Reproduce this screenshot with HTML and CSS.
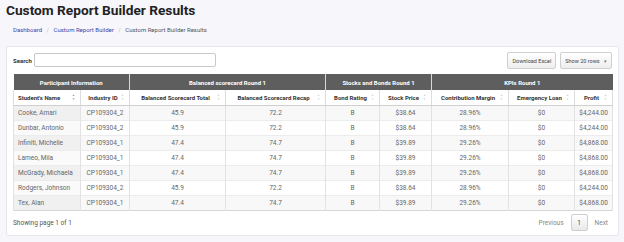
FILE: index.html
```html
<!DOCTYPE html>
<html>
<head>
  <title>Custom Report Builder Results</title>
  <link rel="stylesheet" href="styles.css">
</head>
<body>
  <h1 class="page-title">Custom Report Builder Results</h1>
  <div class="breadcrumb">
    <a href="#">Dashboard</a>
    <span class="sep">/</span>
    <a href="#">Custom Report Builder</a>
    <span class="sep">/</span>
    <span class="current">Custom Report Builder Results</span>
  </div>

  <div class="card">
    <div class="toolbar">
      <label class="search">Search <input type="text"></label>
      <div class="actions">
        <button class="btn">Download Excel</button>
        <button class="btn">Show 20 rows <span class="caret">&#9662;</span></button>
      </div>
    </div>

    <table class="report">
      <colgroup>
        <col style="width:67px">
        <col style="width:49px">
        <col style="width:96px">
        <col style="width:100px">
        <col style="width:54px">
        <col style="width:52px">
        <col style="width:77px">
        <col style="width:66px">
        <col style="width:38px">
      </colgroup>
      <thead>
        <tr class="group-row">
          <th colspan="2">Participant Information</th>
          <th colspan="2">Balanced scorecard Round 1</th>
          <th colspan="2">Stocks and Bonds Round 1</th>
          <th colspan="3">KPIs Round 1</th>
        </tr>
        <tr class="col-row">
          <th class="left sorted">Student's Name</th>
          <th>Industry ID</th>
          <th>Balanced Scorecard Total</th>
          <th>Balanced Scorecard Recap</th>
          <th>Bond Rating</th>
          <th>Stock Price</th>
          <th>Contribution Margin</th>
          <th>Emergency Loan</th>
          <th>Profit</th>
        </tr>
      </thead>
      <tbody id="rows"></tbody>
    </table>

    <div class="footer">
      <span class="info">Showing page 1 of 1</span>
      <div class="pager">
        <span>Previous</span>
        <span class="page">1</span>
        <span>Next</span>
      </div>
    </div>
  </div>

  <script>
    var data = [
      ["Cooke, Amari", "CP109304_2", "45.9", "72.2", "B", "$38.64", "28.96%", "$0", "$4,244.00"],
      ["Dunbar, Antonio", "CP109304_2", "45.9", "72.2", "B", "$38.64", "28.96%", "$0", "$4,244.00"],
      ["Infiniti, Michelle", "CP109304_1", "47.4", "74.7", "B", "$39.89", "29.26%", "$0", "$4,868.00"],
      ["Lameo, Mila", "CP109304_1", "47.4", "74.7", "B", "$39.89", "29.26%", "$0", "$4,868.00"],
      ["McGrady, Michaela", "CP109304_1", "47.4", "74.7", "B", "$39.89", "29.26%", "$0", "$4,868.00"],
      ["Rodgers, Johnson", "CP109304_2", "45.9", "72.2", "B", "$38.64", "28.96%", "$0", "$4,244.00"],
      ["Tex, Alan", "CP109304_1", "47.4", "74.7", "B", "$39.89", "29.26%", "$0", "$4,868.00"]
    ];
    var html = "";
    data.forEach(function (row) {
      html += "<tr>";
      row.forEach(function (cell, i) {
        html += "<td" + (i === 0 ? " class='left sorted'" : "") + ">" + cell + "</td>";
      });
      html += "</tr>";
    });
    document.getElementById("rows").innerHTML = html;
  </script>
</body>
</html>
```

FILE: styles.css
```css
body {
  margin: 0;
  padding: 0 5px 0 6px;
  background-color: #f6f6fb;
  font-family: Roboto, "Liberation Sans", sans-serif;
  color: #444;
}

.page-title {
  margin: 0;
  padding-top: 1px;
  font-size: 13.7px;
  line-height: 18px;
  font-weight: bold;
  color: #222;
}

.breadcrumb {
  padding: 7px 0 0 7px;
  font-size: 6px;
  height: 14px;
  color: #555;
}

.breadcrumb a {
  color: #3d46a8;
  text-decoration: none;
}

.breadcrumb .sep {
  color: #bbb;
  margin: 0 3px;
}

.card {
  margin-top: 6px;
  background-color: #ffffff;
  border: 1px solid #e6e6ec;
  border-radius: 2px;
  padding: 5px 6px 4px 6px;
}

.toolbar {
  display: flex;
  justify-content: space-between;
  align-items: flex-start;
  margin-bottom: 5px;
}

.search {
  display: flex;
  align-items: center;
  font-size: 6px;
  font-weight: bold;
  color: #333;
  padding-top: 1px;
}

.search input {
  margin-left: 2px;
  width: 180px;
  height: 12px;
  border: 1px solid #c8c8c8;
  border-radius: 2px;
  padding: 0;
}

.actions {
  display: flex;
  gap: 4px;
}

.btn {
  height: 17px;
  padding: 0 4px;
  font-family: Roboto, "Liberation Sans", sans-serif;
  font-size: 5.5px;
  color: #444;
  background: linear-gradient(#ffffff, #eeeeee);
  border: 1px solid #cfcfcf;
  border-radius: 2px;
}

.btn .caret {
  font-size: 5px;
  margin-left: 3px;
  color: #777;
}

.report {
  width: 599px;
  table-layout: fixed;
  border-collapse: collapse;
  font-size: 6.5px;
  border-bottom: 1px solid #d6d6d6;
}

.report th,
.report td {
  white-space: nowrap;
  overflow: hidden;
  text-align: center;
}

.group-row th {
  height: 16px;
  padding: 0;
  background-color: #5e5e5e;
  color: #ffffff;
  font-size: 6px;
  border-left: 1px solid #d8d8d8;
}

.group-row th:first-child {
  border-left: none;
}

.col-row th {
  position: relative;
  height: 15px;
  padding: 0 8px 0 4px;
  font-size: 6px;
  color: #333;
  border: 1px solid #dcdcdc;
  border-top: none;
  border-bottom: 1px solid #cfcfcf;
}

.col-row th::after {
  content: "\25B2\A\25BC";
  white-space: pre;
  position: absolute;
  right: 5px;
  top: 4px;
  font-size: 3px;
  line-height: 3.5px;
  color: #d0d0d0;
}

.col-row th.sorted::after {
  color: #999;
}

.report .left {
  text-align: left;
  padding-left: 4px;
}

.report td {
  height: 14px;
  padding: 0 2px;
  color: #666;
  border-left: 1px solid #e2e2e2;
  border-right: 1px solid #e2e2e2;
  border-top: 1px solid #ececec;
}

.report tbody tr:nth-child(odd) td {
  background-color: #f8f8f8;
}

.report tbody tr:nth-child(odd) td.sorted {
  background-color: #f0f0f0;
}

.report tbody tr:nth-child(even) td.sorted {
  background-color: #fafafa;
}

.footer {
  display: flex;
  justify-content: space-between;
  align-items: center;
  margin-top: 3px;
  font-size: 6.5px;
  color: #555;
}

.pager {
  display: flex;
  align-items: center;
  gap: 7px;
  color: #888;
  padding-right: 4px;
}

.page {
  width: 15px;
  height: 15px;
  display: flex;
  align-items: center;
  justify-content: center;
  color: #444;
  background: linear-gradient(#ffffff, #e8e8e8);
  border: 1px solid #cfcfcf;
  border-radius: 2px;
}
```
